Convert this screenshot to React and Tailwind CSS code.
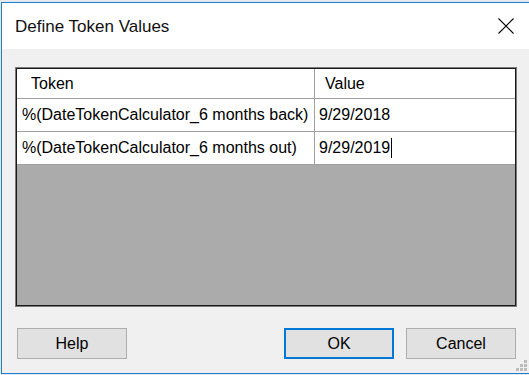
import React from "react";

const rows = [
  { token: "%(DateTokenCalculator_6 months back)", value: "9/29/2018" },
  { token: "%(DateTokenCalculator_6 months out)", value: "9/29/2019", editing: true },
];

const CloseIcon = () => (
  <svg width="16" height="16" viewBox="0 0 16 16" className="block">
    <path d="M0.5 0.5 L15.5 15.5 M15.5 0.5 L0.5 15.5" stroke="#000" strokeWidth="1.1" fill="none" />
  </svg>
);

const SizeGrip = () => (
  <svg width="11" height="11" viewBox="0 0 11 11" className="block">
    {[
      [8, 0],
      [4, 4],
      [8, 4],
      [0, 8],
      [4, 8],
      [8, 8],
    ].map(([x, y]) => (
      <rect key={`${x}-${y}`} x={x} y={y} width="3" height="3" fill="#bcbcbc" />
    ))}
  </svg>
);

const DialogButton = ({ children, isDefault }) => (
  <button
    className={`w-[110px] h-[31px] bg-[#e1e1e1] text-black text-[16px] leading-none ${
      isDefault ? "border-2 border-[#0078d7]" : "border border-[#adadad]"
    }`}
  >
    {children}
  </button>
);

export default function App() {
  return (
    <div
      className="w-[529px] h-[375px] bg-[#e6e9ec] overflow-hidden"
      style={{ fontFamily: '"Liberation Sans", Arial, sans-serif' }}
    >
      <div className="ml-[1px] mt-[2px] w-[528px] h-[372px] border-l border-t border-b border-[#1c7fd6] flex flex-col">
        {/* title bar */}
        <div className="h-[46px] bg-white flex items-center justify-between pl-[13px] pr-[15px]">
          <span className="text-[17px] text-[#111] pt-[2px]">Define Token Values</span>
          <CloseIcon />
        </div>

        {/* body */}
        <div className="flex-1 bg-[#f0f0f0] flex flex-col">
          <div className="ml-[13px] mt-[18px] w-[502px] h-[240px] border border-[#7a7a7a]">
            <div className="h-full border border-[#1a1a1a] bg-[#ababab] flex flex-col">
              <div className="h-[30px] bg-white border-b border-[#a0a0a0] flex text-[16px] text-black">
                <div className="w-[298px] border-r border-[#a0a0a0] pl-[14px] flex items-center">Token</div>
                <div className="flex-1 pl-[10px] flex items-center">Value</div>
              </div>
              {rows.map((row) => (
                <div key={row.token} className="h-[33px] bg-white border-b border-[#a0a0a0] flex text-[16px] text-black">
                  <div className="w-[298px] border-r border-[#a0a0a0] pl-[5px] flex items-center whitespace-nowrap">
                    {row.token}
                  </div>
                  <div className="flex-1 pl-[4px] flex items-center">
                    {row.value}
                    {row.editing && <span className="ml-[1px] w-[1px] h-[20px] bg-black" />}
                  </div>
                </div>
              ))}
            </div>
          </div>

          <div className="mt-[21px] ml-[15px] w-[499px] flex items-center">
            <DialogButton>Help</DialogButton>
            <div className="flex-1" />
            <DialogButton isDefault>OK</DialogButton>
            <div className="w-[12px]" />
            <DialogButton>Cancel</DialogButton>
          </div>

          <div className="flex-1 flex justify-end items-end pr-[2px] pb-[2px]">
            <SizeGrip />
          </div>
        </div>
      </div>
    </div>
  );
}
